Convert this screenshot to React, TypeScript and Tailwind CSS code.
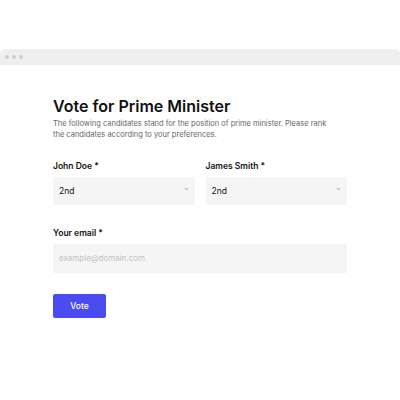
import { useState } from "react";

const ranks = ["1st", "2nd"];

const Caret = () => (
  <svg width="5" height="3" viewBox="0 0 5 3" className="absolute right-[6px] top-[12px] pointer-events-none">
    <path d="M0 0 L5 0 L2.5 2.5 Z" fill="#cdcdcd" />
  </svg>
);

const RankSelect = ({ label }: { label: string }) => {
  const [value, setValue] = useState("2nd");
  return (
    <div className="flex flex-col">
      <label className="text-[8.5px] font-semibold text-[#111] leading-none mb-[5.5px]">{label} *</label>
      <div className="relative">
        <select
          value={value}
          onChange={(e) => setValue(e.target.value)}
          className="appearance-none w-full h-[28px] bg-[#f5f5f5] pl-[6px] text-[8.5px] text-[#111] outline-none rounded-none"
        >
          {ranks.map((r) => (
            <option key={r}>{r}</option>
          ))}
        </select>
        <Caret />
      </div>
    </div>
  );
};

export default function App() {
  return (
    <div className="w-[400px] h-[400px] bg-white pt-[49px] font-['Inter',sans-serif]">
      <div className="h-[16px] bg-[#efefef] rounded-t-[5px] flex items-center gap-[3px] pl-[5px]">
        <span className="w-[4px] h-[4px] rounded-full bg-[#cfcfcf]" />
        <span className="w-[4px] h-[4px] rounded-full bg-[#cfcfcf]" />
        <span className="w-[4px] h-[4px] rounded-full bg-[#cfcfcf]" />
      </div>

      <div className="px-[53px] pt-[32.5px]">
        <h1 className="text-[16px] font-semibold text-[#111] leading-none">Vote for Prime Minister</h1>
        <p className="mt-[4px] text-[7.5px] leading-[11px] text-[#666] pr-[20px]">
          The following candidates stand for the position of prime minister. Please rank the candidates according to your preferences.
        </p>

        <div className="grid grid-cols-2 gap-[11px] mt-[22px]">
          <RankSelect label="John Doe" />
          <RankSelect label="James Smith" />
        </div>

        <div className="mt-[24px] flex flex-col">
          <label className="text-[8.5px] font-semibold text-[#111] leading-none mb-[6.5px]">Your email *</label>
          <input
            type="email"
            placeholder="example@domain.com"
            className="h-[29px] bg-[#f5f5f5] pl-[6px] text-[8px] placeholder-[#c2c2c2] outline-none"
          />
        </div>

        <button className="mt-[21px] w-[53px] h-[24px] rounded-[2px] bg-[#4a4cf2] text-white text-[8.5px] font-medium">
          Vote
        </button>
      </div>
    </div>
  );
}
